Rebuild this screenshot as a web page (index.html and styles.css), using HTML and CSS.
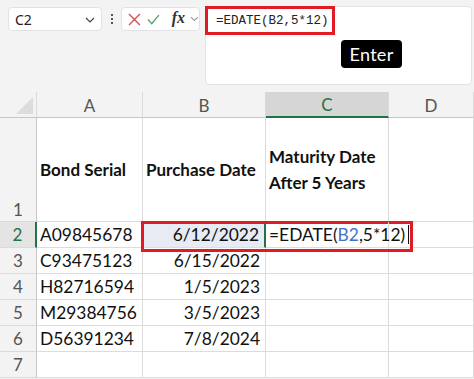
FILE: index.html
```html
<!DOCTYPE html>
<html>
<head>
<meta charset="utf-8">
<link rel="stylesheet" href="styles.css">
</head>
<body>
<div class="topbar">
  <div class="namebox">
    <span class="name">C2</span>
    <svg class="chev" width="10" height="6" viewBox="0 0 10 6"><path d="M1 1 L5 5 L9 1" fill="none" stroke="#444" stroke-width="1.2"/></svg>
  </div>
  <div class="dots"><i></i><i></i><i></i></div>
  <div class="fxbox">
    <svg width="13" height="13" viewBox="0 0 13 13"><path d="M1 1 L12 12 M12 1 L1 12" stroke="#e0474c" stroke-width="1.3" fill="none"/></svg>
    <svg width="13" height="11" viewBox="0 0 13 11"><path d="M1 5.5 L4.8 9.8 L12 1" stroke="#5a9e6f" stroke-width="1.3" fill="none"/></svg>
    <span class="fx">fx</span>
    <svg class="chev2" width="9" height="6" viewBox="0 0 9 6"><path d="M1 1 L4.5 4.5 L8 1" fill="none" stroke="#999" stroke-width="1.1"/></svg>
  </div>
  <div class="formula">
    <span class="ftext">=EDATE(B2,5*12)</span>
    <span class="enter">Enter</span>
  </div>
</div>
<div class="sheet">
  <div class="hd corner"><span class="tri"></span></div>
  <div class="hd col">A</div>
  <div class="hd col">B</div>
  <div class="hd col active">C</div>
  <div class="hd col">D</div>

  <div class="rh r1">1</div>
  <div class="c h1">Bond Serial</div>
  <div class="c h1">Purchase Date</div>
  <div class="c h1 h1l">Maturity Date<br>After 5 Years</div>
  <div class="c h1"></div>

  <div class="rh ractive">2</div>
  <div class="c">A09845678</div>
  <div class="c num ref">6/12/2022</div>
  <div class="c edit"><span>=EDATE(<span class="blue">B2</span>,5*12)</span><span class="caret"></span></div>
  <div class="c"></div>

  <div class="rh">3</div>
  <div class="c">C93475123</div>
  <div class="c num">6/15/2022</div>
  <div class="c"></div>
  <div class="c"></div>

  <div class="rh">4</div>
  <div class="c">H82716594</div>
  <div class="c num">1/5/2023</div>
  <div class="c"></div>
  <div class="c"></div>

  <div class="rh">5</div>
  <div class="c">M29384756</div>
  <div class="c num">3/5/2023</div>
  <div class="c"></div>
  <div class="c"></div>

  <div class="rh">6</div>
  <div class="c">D56391234</div>
  <div class="c num">7/8/2024</div>
  <div class="c"></div>
  <div class="c"></div>

  <div class="rh">7</div>
  <div class="c"></div>
  <div class="c"></div>
  <div class="c"></div>
  <div class="c"></div>

  <div class="redbox"></div>
</div>
</body>
</html>
```

FILE: styles.css
```css
* { box-sizing: border-box; }
html, body { margin: 0; padding: 0; }
body {
  width: 474px;
  height: 379px;
  overflow: hidden;
  background: #f3f3f3;
  font-family: "Lato", "Noto Sans", sans-serif;
}
.topbar {
  height: 92px;
  display: flex;
  align-items: flex-start;
  padding: 6px 0 0 8px;
}
.namebox {
  margin-top: 1px;
  width: 94px;
  height: 24px;
  background: #fff;
  border: 1px solid #e2e2e2;
  border-radius: 4px;
  display: flex;
  align-items: center;
  justify-content: space-between;
  padding: 0 6px 0 6px;
  font-family: "Noto Sans", sans-serif;
  font-size: 14px;
  color: #222;
}
.namebox .chev { margin-top: 2px; }
.dots {
  width: 19px;
  height: 24px;
  margin-top: 1px;
  display: flex;
  flex-direction: column;
  align-items: center;
  justify-content: center;
  gap: 2px;
}
.dots i { width: 2px; height: 2px; background: #555; display: block; }
.fxbox {
  margin-top: 1px;
  width: 79px;
  height: 24px;
  background: #fff;
  border: 1px solid #e2e2e2;
  border-radius: 4px;
  display: flex;
  align-items: center;
  padding-left: 6px;
  gap: 6px;
}
.fx {
  font-family: "Liberation Serif", serif;
  font-style: italic;
  font-weight: bold;
  font-size: 16px;
  color: #333;
  margin-left: 6px;
  margin-top: -2px;
}
.chev2 { margin-left: -1px; }
.formula {
  margin-left: 5px;
  width: 267px;
  height: 79px;
  background: #fff;
  border: 1px solid #e2e2e2;
  border-radius: 4px;
  display: flex;
  flex-direction: column;
  align-items: flex-start;
}
.ftext {
  margin: -1px 0 0 -1px;
  width: 130px;
  height: 29px;
  border: 3px solid #e01b24;
  font-family: "Liberation Mono", monospace;
  font-size: 12.5px;
  color: #222;
  padding: 4px 0 0 8px;
  line-height: 16px;
}
.enter {
  margin: 5px 0 0 135px;
  width: 61px;
  height: 28px;
  background: #000;
  color: #fff;
  border-radius: 4px;
  font-family: "Lato", sans-serif;
  font-size: 18px;
  display: flex;
  align-items: center;
  justify-content: center;
  letter-spacing: 0.3px;
}
.sheet {
  position: relative;
  display: grid;
  grid-template-columns: 37px 106px 123px 123px 85px;
  grid-template-rows: 26px 104px repeat(6, 26px);
  background: #fff;
}
.hd {
  background: #f3f3f3;
  border-right: 1px solid #dadada;
  border-bottom: 1px solid #c6c6c6;
  color: #555;
  font-size: 17px;
  display: flex;
  align-items: center;
  justify-content: center;
  padding-top: 1px;
}
.corner { position: relative; }
.tri {
  position: absolute;
  right: 3px;
  bottom: 3px;
  width: 0; height: 0;
  border-left: 17px solid transparent;
  border-bottom: 17px solid #dcdcdc;
}
.hd.active {
  background: #d6d6d6;
  color: #217346;
  border-bottom: 2px solid #217346;
}
.rh {
  background: #f3f3f3;
  border-right: 1px solid #c6c6c6;
  border-bottom: 1px solid #dadada;
  color: #555;
  font-size: 17px;
  display: flex;
  align-items: center;
  justify-content: center;
}
.rh.r1 { align-items: flex-end; padding-bottom: 1px; }
.rh.ractive {
  background: #e4e4e4;
  color: #217346;
  border-right: 2px solid #217346;
}
.c {
  border-right: 1px solid #dcdcdc;
  border-bottom: 1px solid #dcdcdc;
  font-size: 17.4px;
  color: #111;
  padding: 0 3px;
  display: flex;
  align-items: center;
  white-space: nowrap;
  line-height: 26px;
}
.c.h1 { font-weight: bold; font-size: 17px; }
.c.num { justify-content: flex-end; padding-right: 5px; }
.c.ref { background: #e7ebf4; border-right: 2px solid #217346; }
.c.edit { padding-left: 3px; overflow: visible; position: relative; z-index: 1; }
.blue { color: #4472c4; }
.caret {
  flex: none;
  display: block;
  width: 1px;
  height: 19px;
  background: #111;
  margin-left: 3px;
}
.redbox {
  position: absolute;
  left: 141px;
  top: 129px;
  width: 272px;
  height: 31px;
  border: 3px solid #e01b24;
  pointer-events: none;
}
```
